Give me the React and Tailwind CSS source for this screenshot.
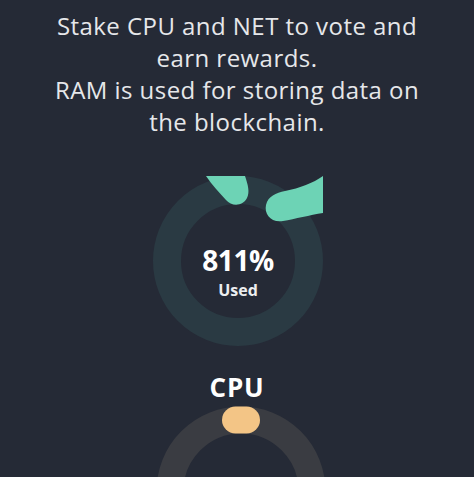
export default function App() {
  return (
    <div className="h-screen w-full bg-[#252a36] overflow-hidden flex flex-col items-center font-['Open_Sans',sans-serif]">
      <p className="pt-[10px] text-center text-[24px] leading-[32px] tracking-[0.45px] text-[#e6e7ea]">
        <span className="block">Stake CPU and NET to vote and</span>
        <span className="block">earn rewards.</span>
        <span className="block">RAM is used for storing data on</span>
        <span className="block">the blockchain.</span>
      </p>

      {/* RAM usage */}
      <div className="relative shrink-0 mt-[38px] w-[170px] h-[170px] ml-[2px]">
        <svg width="170" height="170" viewBox="153 176 170 170" className="block">
          <circle cx="238" cy="261" r="71" fill="none" stroke="#2a3a43" strokeWidth="28" />
          <path
            d="M206,176 L245,176 C248,185 250,192 247,198 C243,206 232,207 226,200 C219,192 212,185 206,176 Z"
            fill="#6dd3b5"
          />
          <path
            d="M323,176 L323,213 C310,215 295,219 283,221 C271,223 264,214 266,205 C268,196 276,193 285,191 C300,188 313,183 323,176 Z"
            fill="#6dd3b5"
          />
        </svg>
        <div className="absolute inset-0 flex flex-col items-center justify-center pt-[22px]">
          <span className="text-[28px] leading-[32px] font-bold tracking-[-0.5px] text-white">811%</span>
          <span className="mt-[3px] text-[16px] leading-[22px] font-bold text-[#eceef0]">Used</span>
        </div>
      </div>

      {/* CPU */}
      <h2 className="shrink-0 mt-[25px] text-[26px] leading-[32px] font-bold tracking-[0.8px] text-white">CPU</h2>
      <div className="shrink-0 mt-[3px] w-[170px] h-[170px] ml-[8px]">
        <svg width="170" height="170" viewBox="0 0 170 170" className="block">
          <circle cx="85" cy="85" r="71" fill="none" stroke="#3a3c42" strokeWidth="27" />
          <path d="M79.5,14 L90.5,14" fill="none" stroke="#f3c586" strokeWidth="27" strokeLinecap="round" />
        </svg>
      </div>
    </div>
  )
}
